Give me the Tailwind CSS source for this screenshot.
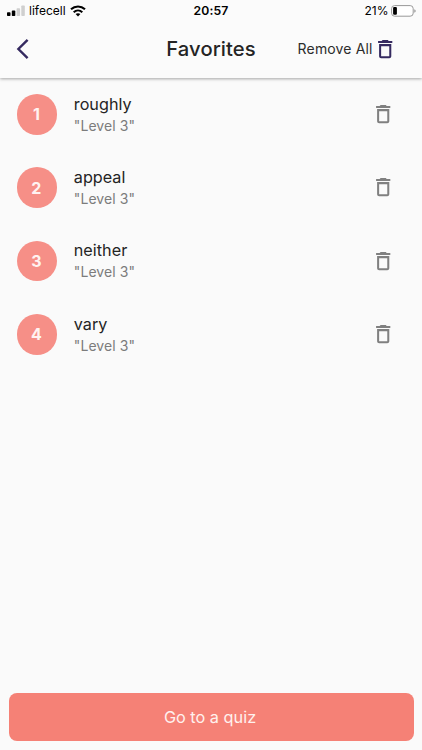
<!DOCTYPE html>
<html lang="en">
<head>
<meta charset="utf-8">
<meta name="viewport" content="width=device-width, initial-scale=1">
<title>Favorites</title>
<script src="https://cdn.jsdelivr.net/npm/@tailwindcss/browser@4"></script>
</head>
<body class="h-[750px] overflow-hidden bg-[#fafafa] font-['Inter','Liberation_Sans',sans-serif] text-[#242424]">
<svg class="hidden">
  <symbol id="trash" viewBox="0 0 24 24"><path fill="currentColor" d="M6 19c0 1.1.9 2 2 2h8c1.1 0 2-.9 2-2V7H6v12zM8 9h8v10H8V9zm7.5-5l-1-1h-5l-1 1H5v2h14V4h-3.5z"/></symbol>
</svg>
<div class="flex h-full flex-col">
  <header class="h-[77.7px] shrink-0 bg-[#fbfbfb] shadow-[0_1px_3px_rgba(0,0,0,0.34)]">
    <div class="grid h-[22px] grid-cols-[1fr_auto_1fr] items-center pr-[6px] pl-[7px] text-[12px] leading-[22px] text-black">
      <div class="flex items-center">
        <svg class="mr-[4px] h-[12px] w-[18px]" viewBox="0 0 18 12"><rect x="0" y="7.2" width="3.5" height="3.8" rx=".8"/><rect x="4.8" y="5.6" width="3.5" height="5.4" rx=".8"/><rect x="9.6" y="3.2" width="3.5" height="7.8" rx=".8" fill="#cfcfcf"/><rect x="14.3" y=".5" width="3.5" height="10.5" rx=".8" fill="#cfcfcf"/></svg>
        <span class="w-[41px] whitespace-nowrap">lifecell</span>
        <svg class="h-[12px] w-[16px]" viewBox="0 0 16 12"><g fill="none" stroke="#000" stroke-width="2.1"><path d="M1 4.3C5 .5 11 .5 15 4.3"/><path d="M3.7 7.2c2.5-2.3 6.1-2.3 8.6 0"/></g><path d="M8 11.5 5.6 9.1c1.4-1.2 3.4-1.2 4.8 0z"/></svg>
      </div>
      <span class="-ml-px text-[12.2px] font-semibold tracking-[0.2px]">20:57</span>
      <div class="flex items-center justify-end">
        <span class="mr-[2.5px]">21%</span>
        <svg class="h-[12px] w-[25px]" viewBox="0 0 25 12"><rect x=".6" y=".6" width="21.6" height="10.6" rx="3" fill="#fff" stroke="#999"/><rect x="2.1" y="2.1" width="3.8" height="7.6" rx="1"/><path d="M23.4 4.2c1.6.5 1.6 3 0 3.5z" fill="#888"/></svg>
      </div>
    </div>
    <div class="grid h-[54px] grid-cols-[1fr_auto_1fr] items-center pr-[26px] pl-[16px]">
      <svg class="h-[22px] w-[14px]" viewBox="0 0 14 22" fill="none" stroke="#352a60" stroke-width="2.4"><path d="M11.6 1.9 2.4 11l9.2 9.1"/></svg>
      <h1 class="-mr-[10px] text-[20.2px] leading-[24px] font-medium tracking-[0.1px]">Favorites</h1>
      <button class="flex items-center justify-end text-[14px] tracking-[0.15px] whitespace-nowrap text-[#2c2c2c]"><span>Remove All</span><svg class="-mr-[1px] h-[24.4px] w-[24.4px] text-[#352a60]"><use href="#trash"/></svg></button>
    </div>
  </header>
  <main class="grow">
    <ul id="list"></ul>
  </main>
  <footer class="px-[8.5px] pb-[9px]">
    <button class="flex h-[48.5px] w-full items-center justify-center rounded-[8px] bg-[#f58176] pr-[2px] text-[16.3px] text-[#fff1ee]">Go to a quiz</button>
  </footer>
</div>
<template id="row">
  <li class="flex h-[73.3px] items-center pr-[27px] pl-[16.6px]">
    <span data-n class="flex h-[40.6px] w-[40.6px] items-center justify-center rounded-full bg-[#f68f87] pr-px text-[16px] font-bold text-[#fff3f1]"></span>
    <div class="ml-[16.6px] grow pt-[1px]">
      <p data-word class="text-[16.2px] leading-[21px] tracking-[0.02px]"></p>
      <p class="text-[14px] leading-[21px] tracking-[0.08px] text-[#7c7c7c]">"Level 3"</p>
    </div>
    <svg class="h-[24.4px] w-[24.4px] text-[#808080]"><use href="#trash"/></svg>
  </li>
</template>
<script>
  const row = document.getElementById('row');
  ['roughly', 'appeal', 'neither', 'vary'].forEach((word, i) => {
    const li = row.content.cloneNode(true);
    li.querySelector('[data-n]').textContent = i + 1;
    li.querySelector('[data-word]').textContent = word;
    document.getElementById('list').append(li);
  });
</script>
</body>
</html>
